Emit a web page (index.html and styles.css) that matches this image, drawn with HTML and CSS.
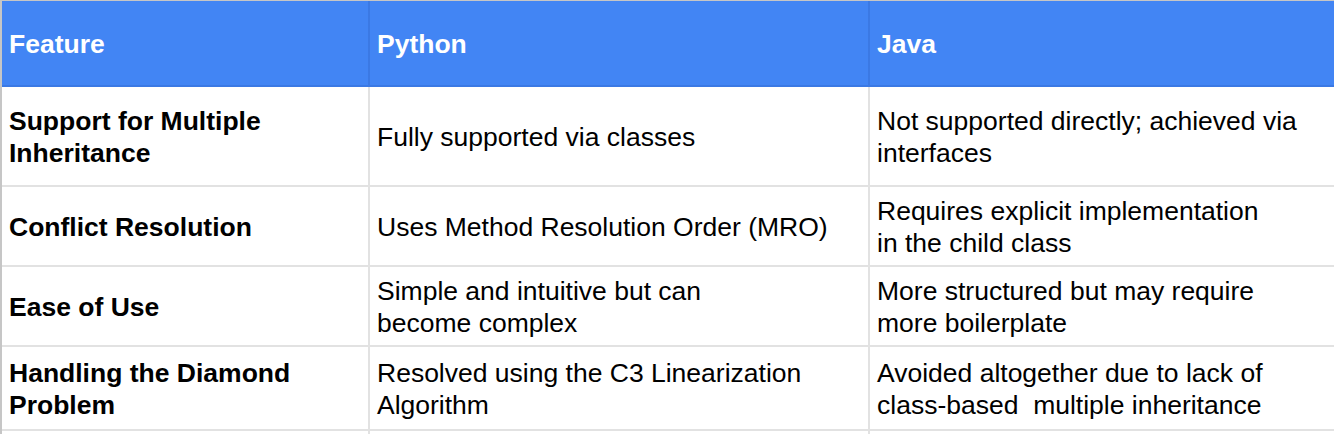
FILE: index.html
```html
<!DOCTYPE html>
<html>
<head>
<meta charset="utf-8">
<link rel="stylesheet" href="styles.css">
</head>
<body>
<div class="frame">
<table class="cmp">
  <colgroup>
    <col class="c1"><col class="c2"><col class="c3">
  </colgroup>
  <thead>
    <tr class="hrow">
      <th>Feature</th>
      <th>Python</th>
      <th class="last">Java</th>
    </tr>
  </thead>
  <tbody>
    <tr class="r1">
      <td class="feat">Support for Multiple<br>Inheritance</td>
      <td>Fully supported via classes</td>
      <td class="last">Not supported directly; achieved via<br>interfaces</td>
    </tr>
    <tr class="r2">
      <td class="feat">Conflict Resolution</td>
      <td>Uses Method Resolution Order (MRO)</td>
      <td class="last">Requires explicit implementation<br>in the child class</td>
    </tr>
    <tr class="r3">
      <td class="feat">Ease of Use</td>
      <td>Simple and intuitive but can<br>become complex</td>
      <td class="last">More structured but may require<br>more boilerplate</td>
    </tr>
    <tr class="r4">
      <td class="feat">Handling the Diamond<br>Problem</td>
      <td>Resolved using the C3 Linearization<br>Algorithm</td>
      <td class="last">Avoided altogether due to lack of<br>class-based&nbsp; multiple inheritance</td>
    </tr>
    <tr class="r5">
      <td></td><td></td><td class="last"></td>
    </tr>
  </tbody>
</table>
</div>
</body>
</html>
```
FILE: styles.css
```css
html, body {
  margin: 0;
  padding: 0;
  background: #ffffff;
}
body {
  width: 1334px;
  height: 434px;
  overflow: hidden;
}
.frame {
  border-top: 1px solid #c6c6c6;
  border-left: 2px solid #c6c6c6;
  width: 1332px;
}
.cmp {
  border-collapse: separate;
  border-spacing: 0;
  table-layout: fixed;
  width: 1332px;
  font-family: "Liberation Sans", Arial, sans-serif;
  font-size: 26.5px;
  line-height: 32px;
  color: #000;
}
.c1 { width: 368px; }
.c2 { width: 500px; }
.c3 { width: 464px; }
.cmp th, .cmp td {
  padding: 2px 7px 0;
  text-align: left;
  vertical-align: middle;
  white-space: nowrap;
  overflow: hidden;
  box-sizing: border-box;
}
.cmp th {
  background: #4285f4;
  color: #ffffff;
  font-weight: bold;
  height: 86px;
  border-right: 2px solid #3b79e4;
  border-bottom: 2px solid #3b79e4;
}
.cmp td {
  border-right: 2px solid #e2e2e2;
  border-bottom: 2px solid #e2e2e2;
}
.cmp th.last, .cmp td.last {
  border-right: none;
}
.cmp td.feat {
  font-weight: bold;
}
.r1 td { height: 100px; }
.r2 td { height: 80px; }
.r3 td { height: 80px; }
.r4 td { height: 84px; }
.r5 td {
  height: 3px;
  padding: 0;
  border-bottom: none;
  line-height: 0;
  font-size: 0;
}
```
